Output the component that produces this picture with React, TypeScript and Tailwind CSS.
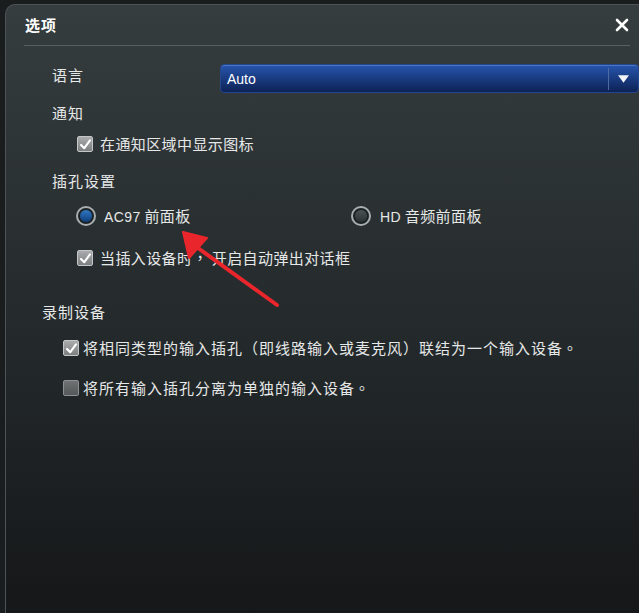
import React from "react";

const cjk = { fontFamily: '"Noto Sans CJK SC", "Noto Sans", sans-serif' };
const latin = { fontFamily: '"Liberation Sans", "DejaVu Sans", sans-serif' };

// full-width punctuation raised to mid height, like the original
function Mid({ children }: { children: React.ReactNode }) {
  return <span className="relative -top-[5px] pl-[4px]">{children}</span>;
}

function Checkbox({ checked }: { checked: boolean }) {
  return (
    <span
      className={
        "flex h-[16px] w-[16px] shrink-0 items-center justify-center rounded-[2px] border " +
        (checked
          ? "border-[#c4c6c7] bg-gradient-to-b from-[#a9abac] to-[#7d8081]"
          : "border-[#8e9192] bg-gradient-to-b from-[#6f7273] to-[#555859]")
      }
    >
      {checked && (
        <svg viewBox="0 0 16 16" className="h-[13px] w-[13px]">
          <path d="M2.5 8.5 L6.5 12.5 L13.5 3" fill="none" stroke="#ffffff" strokeWidth="2.6" strokeLinecap="round" strokeLinejoin="round" />
        </svg>
      )}
    </span>
  );
}

function Radio({ on }: { on: boolean }) {
  return (
    <span className="flex h-[20px] w-[20px] shrink-0 items-center justify-center rounded-full border-2 border-[#a9aeb0] bg-[#1d2224]">
      <span
        className={
          "h-[12px] w-[12px] rounded-full " +
          (on
            ? "bg-gradient-to-b from-[#2f78c4] to-[#0f3f7c]"
            : "bg-gradient-to-b from-[#4b5356] to-[#2c3335]")
        }
      />
    </span>
  );
}

export default function App() {
  return (
    <div className="relative h-[613px] w-[639px] overflow-hidden bg-[#1a1d1e] pl-[5px] pt-[4px]" style={cjk}>
      <div className="flex h-[613px] flex-col rounded-tl-[10px] border-l border-t border-[#4d5354] bg-gradient-to-b from-[#363d3f] via-[#252b2d] to-[#151718] text-[15px] leading-[20px] text-[#e6e8e8]">
        {/* title bar */}
        <div className="flex h-[40px] items-center justify-between pl-[19px] pr-[10px]">
          <span className="text-[15px] font-bold tracking-[1px] text-white">选项</span>
          <svg viewBox="0 0 14 14" className="h-[14px] w-[14px]">
            <path d="M2 2 L12 12 M12 2 L2 12" stroke="#ffffff" strokeWidth="2.6" strokeLinecap="round" />
          </svg>
        </div>
        <div className="ml-[18px] mr-[9px] h-px bg-[#5a6062]" />

        {/* language */}
        <div className="mt-[18px] flex items-start">
          <span className="ml-[46px] mt-[1px] w-[168px] tracking-[1px]">语言</span>
          <div className="flex h-[29px] flex-1 items-center rounded-[4px] border border-[#24468c] bg-gradient-to-b from-[#2756ad] to-[#0d2257] shadow-[inset_0_1px_0_#4a76c4]">
            <span className="ml-[6px] flex-1 text-[14px] text-white" style={latin}>
              Auto
            </span>
            <span className="h-[22px] w-px bg-[#4e6aa2]" />
            <svg viewBox="0 0 12 8" className="mx-[9px] h-[8px] w-[11px]">
              <path d="M0 0 H12 L6 8 Z" fill="#f2f4f8" />
            </svg>
          </div>
        </div>

        {/* notify */}
        <div className="ml-[46px] mt-[10px] h-[20px] tracking-[1px]">通知</div>
        <div className="ml-[71px] mt-[11px] flex h-[20px] items-center gap-[7px] tracking-[0.4px]">
          <Checkbox checked />
          <span>在通知区域中显示图标</span>
        </div>

        {/* jack settings */}
        <div className="ml-[46px] mt-[17px] h-[20px] tracking-[1px]">插孔设置</div>
        <div className="mt-[14px] flex h-[22px] items-center">
          <div className="ml-[70px] flex w-[275px] items-center gap-[8px]">
            <Radio on />
            <span className="tracking-[0.4px]">
              <span className="text-[14px]" style={latin}>AC97</span> 前面板
            </span>
          </div>
          <div className="flex items-center gap-[9px]">
            <Radio on={false} />
            <span className="tracking-[0.4px]">
              <span className="text-[14px]" style={latin}>HD</span> 音频前面板
            </span>
          </div>
        </div>
        <div className="ml-[71px] mt-[21px] flex h-[20px] items-center gap-[7px] tracking-[0.4px]">
          <Checkbox checked />
          <span>
            当插入设备时<Mid>，</Mid>开启自动弹出对话框
          </span>
        </div>

        {/* recording */}
        <div className="ml-[36px] mt-[34px] h-[20px] tracking-[1px]">录制设备</div>
        <div className="ml-[57px] mt-[16px] flex h-[20px] items-center gap-[4px] tracking-[1px]">
          <Checkbox checked />
          <span>
            将相同类型的输入插孔（即线路输入或麦克风）联结为一个输入设备<Mid>。</Mid>
          </span>
        </div>
        <div className="ml-[57px] mt-[20px] flex h-[20px] items-center gap-[4px] tracking-[1px]">
          <Checkbox checked={false} />
          <span>
            将所有输入插孔分离为单独的输入设备<Mid>。</Mid>
          </span>
        </div>
      </div>

      {/* red annotation arrow */}
      <svg className="pointer-events-none absolute left-0 top-0 h-[613px] w-[639px]" viewBox="0 0 639 613">
        <path d="M277 305 L198 248" stroke="#e8262b" strokeWidth="4" strokeLinecap="round" />
        <path d="M183 232 L207 238 L189 258 Z" fill="#e8262b" stroke="#e8262b" strokeWidth="2" strokeLinejoin="round" />
      </svg>
    </div>
  );
}
